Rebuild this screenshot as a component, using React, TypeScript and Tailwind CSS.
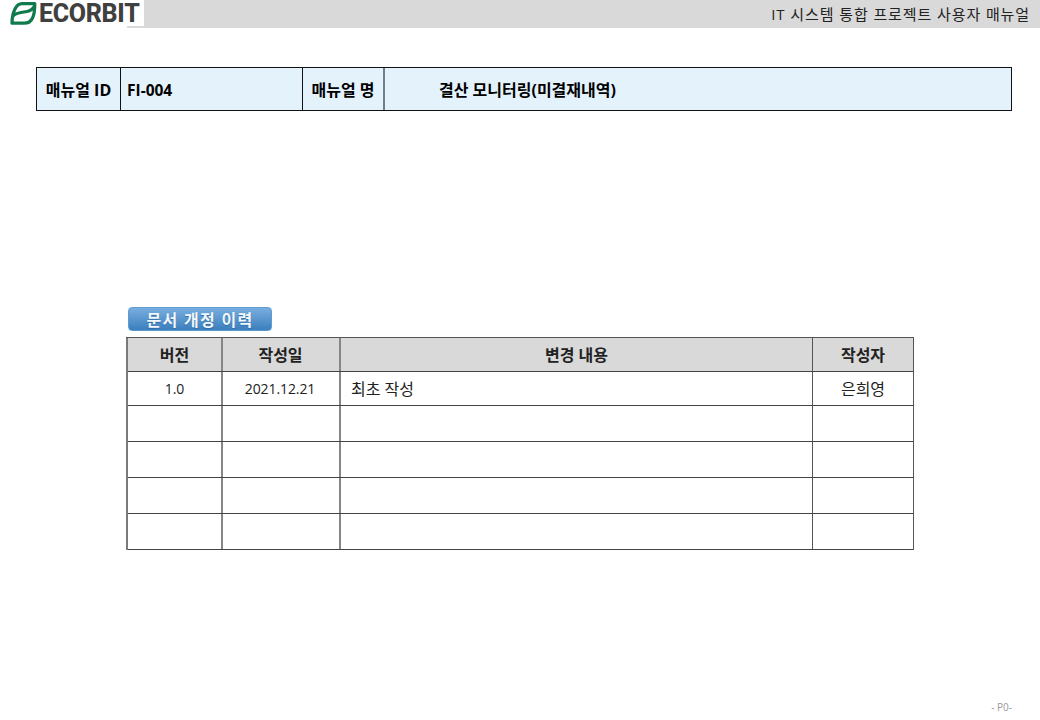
const font = "font-['Open_Sans','Noto_Sans_CJK_KR',sans-serif]"

const revisions = [
    ['1.0', '2021.12.21', '최초 작성', '은희영'],
    ['', '', '', ''],
    ['', '', '', ''],
    ['', '', '', ''],
    ['', '', '', ''],
]

const rowHeights = ['h-[34px]', 'h-[36px]', 'h-[36px]', 'h-[36px]', 'h-[36px]']

function Logo() {
    return (
        <div className="flex h-[26px] w-[144px] items-center bg-white pl-[9px]">
            <svg width="28" height="25" viewBox="0 0 28 25" fill="none" className="shrink-0">
                <path
                    d="M13 2.700H25.800C25.800 9 25 14 23.500 17C22 20.500 19 22.200 15 22.200H3C3 16 4 12 6 8C7.500 5 9.500 2.700 13 2.700Z"
                    stroke="#0f7a4b"
                    strokeWidth="3.200"
                    strokeLinejoin="round"
                />
                <path d="M4 15C6 12.500 9 12 12 11.500L18 10.500C21 10 24 8 25.500 5" stroke="#0f7a4b" strokeWidth="3.200" />
            </svg>
            <span className="ml-[2px] pt-[1px] font-['Roboto',sans-serif] text-[25px] leading-none font-extrabold tracking-[-0.3px] text-[#404040]">
                ECORBIT
            </span>
        </div>
    )
}

function RevisionRow({ cells, height }: { cells: string[]; height: string }) {
    return (
        <div className={`grid grid-cols-[95px_118px_472px_100px] border-b border-[#444] text-[#222] ${height}`}>
            <div className="flex items-center justify-center border-r-2 border-[#868686] text-[14px]">{cells[0]}</div>
            <div className="flex items-center justify-center border-r-2 border-[#868686] pr-[2px] text-[14px] tracking-[-0.1px]">{cells[1]}</div>
            <div className="flex items-center border-r border-[#555] pl-[10px] text-[16px]">{cells[2]}</div>
            <div className="flex items-center justify-center text-[16px]">{cells[3]}</div>
        </div>
    )
}

export default function App() {
    return (
        <div className={`relative h-[720px] w-[1040px] overflow-hidden bg-white ${font}`}>
            {/* Header */}
            <div className="ml-[127px] flex h-[28px] items-center justify-end bg-[#d9d9d9] pr-[10px] text-[15px] tracking-[0.9px] text-[#222]">
                IT 시스템 통합 프로젝트 사용자 매뉴얼
            </div>
            <div className="absolute top-0 left-0">
                <Logo />
            </div>

            {/* Manual info */}
            <div className="mt-[39px] ml-[36px] grid h-[44px] w-[976px] grid-cols-[84px_182px_82px_1fr] border border-[#111] bg-[#e4f2fc] text-[16px] font-bold text-black">
                <div className="flex items-center justify-center border-r border-[#111] pt-[1px]">매뉴얼 ID</div>
                <div className="flex items-center border-r border-[#111] pt-[3px] pl-[6px] text-[15.500px]">FI-004</div>
                <div className="flex items-center justify-center border-r-2 border-[#6f7f8a] pt-[1px]">매뉴얼 명</div>
                <div className="flex items-center pt-[1px] pl-[54px]">결산 모니터링(미결재내역)</div>
            </div>

            {/* Revision history */}
            <div className="mt-[196px] ml-[128px] flex h-[24px] w-[144px] items-center justify-center rounded-[4px] border border-[#5f9bd1] bg-gradient-to-b from-[#79aede] to-[#3a7fbd] pt-[1px] text-[16px] font-bold tracking-[1.300px] text-[#f4f8fc] [text-shadow:0_1px_1px_#2f6da6]">
                문서 개정 이력
            </div>
            <div className="mt-[6px] ml-[126px] w-[788px] border-t border-[#555]">
                <div className="border-r border-l-2 border-r-[#555] border-l-[#7a7a7a]">
                    <div className="grid h-[34px] grid-cols-[95px_118px_472px_100px] border-b border-[#444] bg-[#d9d9d9] text-[16px] font-bold text-[#222]">
                        <div className="flex items-center justify-center border-r-2 border-[#868686]">버전</div>
                        <div className="flex items-center justify-center border-r-2 border-[#868686] pr-[1px]">작성일</div>
                        <div className="flex items-center justify-center border-r border-[#555]">변경 내용</div>
                        <div className="flex items-center justify-center">작성자</div>
                    </div>
                    {revisions.map((cells, i) => (
                        <RevisionRow key={i} cells={cells} height={rowHeights[i]} />
                    ))}
                </div>
            </div>

            {/* Page number */}
            <div className="absolute right-[28px] bottom-[5px] text-[10px] text-[#999]">- P0-</div>
        </div>
    )
}
